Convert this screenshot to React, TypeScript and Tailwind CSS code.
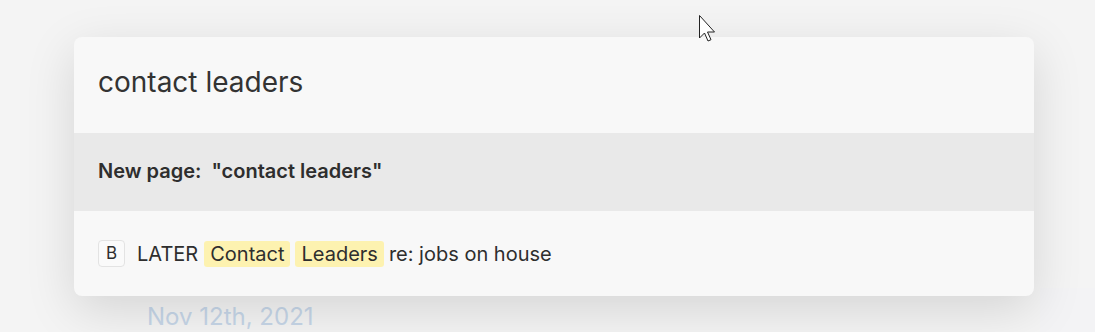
import React from "react";

export default function App() {
  return (
    <div
      className="relative w-[1095px] h-[332px] overflow-hidden bg-[#f4f4f4]"
      style={{ fontFamily: "Inter, 'Noto Sans', sans-serif" }}
    >
      <div className="absolute left-[1040px] right-0 top-[288px] bottom-0 bg-[#f3f3f5]" />
      <div className="absolute left-[147px] top-[305px] text-[24px] text-[#c6d6e8] leading-none">
        Nov 12th, 2021
      </div>
      <div className="absolute left-[74px] top-[37px] w-[960px] rounded-lg bg-[#f8f8f8] shadow-[0_14px_50px_rgba(0,0,0,0.13)] overflow-hidden">
        <div className="h-[96px] flex items-center px-6 text-[28px] text-[#333333] pb-[6px]">
          contact leaders
        </div>
        <div className="h-[78px] flex items-center px-6 pb-[3px] bg-[#e9e9e9] text-[20px] font-semibold text-[#2e2e2e]">
          New page:&nbsp;&nbsp;"contact leaders"
        </div>
        <div className="h-[85px] flex items-center px-6 text-[20px] text-[#2e2e2e]">
          <span className="w-[27px] h-[27px] flex items-center justify-center border border-[#e3e3e3] rounded bg-[#fafafa] text-[17px] mr-[12px]">
            B
          </span>
          <span>LATER</span>
          <span className="ml-[6px] h-[26px] flex items-center bg-[#fdf2b0] rounded-[3px] px-[6px]">Contact</span>
          <span className="ml-[5px] h-[26px] flex items-center bg-[#fdf2b0] rounded-[3px] px-[6px]">Leaders</span>
          <span className="ml-[5px]">re: jobs on house</span>
        </div>
      </div>
      <svg
        className="absolute left-[699px] top-[15px]"
        width="20"
        height="28"
        viewBox="0 0 20 28"
      >
        <path
          d="M0.5 0.5 L0.5 23 L5.5 18 L9 26 L12 24.7 L8.5 17 L15.5 17 Z"
          fill="white"
          stroke="#222"
          strokeWidth="1"
          strokeLinejoin="round"
        />
      </svg>
    </div>
  );
}
